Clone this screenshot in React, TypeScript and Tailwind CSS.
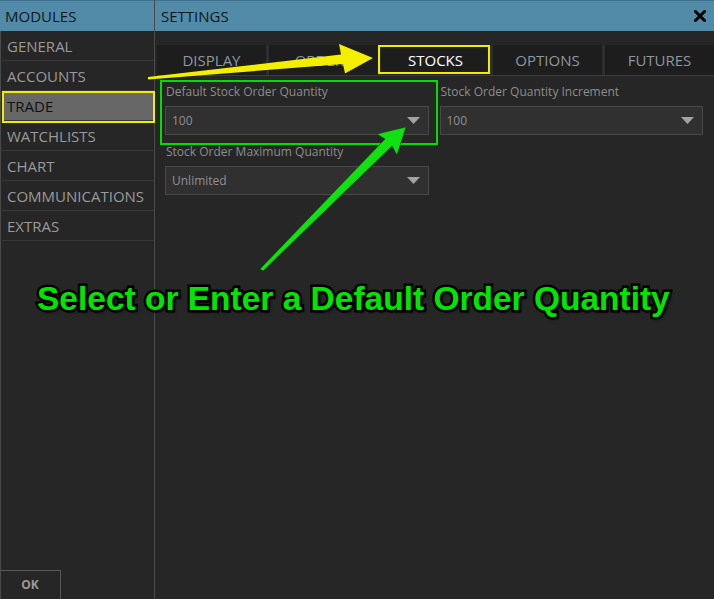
import React from "react";

const sideItems = ["GENERAL", "ACCOUNTS", "TRADE", "WATCHLISTS", "CHART", "COMMUNICATIONS", "EXTRAS"];
const tabs = ["DISPLAY", "ORDERS", "STOCKS", "OPTIONS", "FUTURES"];

function Caret() {
  return (
    <svg width="13" height="7" viewBox="0 0 13 7" className="shrink-0">
      <path d="M0 0 L13 0 L6.5 7 Z" fill="#a3a3a3" />
    </svg>
  );
}

function Field({ label, value }: { label: string; value: string }) {
  return (
    <div className="flex flex-col">
      <div className="pl-[1px] text-[12px] leading-[15px] text-[#8d8d8d] whitespace-nowrap">{label}</div>
      <div className="mt-[7px] h-[29px] flex items-center justify-between border border-[#484848] bg-[#303030] pl-[6px] pr-[8px]">
        <span className="text-[12px] text-[#8f8f8f]">{value}</span>
        <Caret />
      </div>
    </div>
  );
}

export default function App() {
  return (
    <div className="relative w-[714px] h-[599px] overflow-hidden bg-[#262626] font-['Open_Sans',sans-serif]">
      <div className="flex h-full">
        {/* Sidebar */}
        <aside className="w-[155px] flex flex-col border-r border-[#4a4a4a]">
          <div className="h-[31px] shrink-0 flex items-center pl-[5px] bg-[#528ba8] border-t border-[#3f7190] text-[15px] text-[#0e1820]">
            MODULES
          </div>
          <div className="flex-1 flex flex-col border-l border-[#4a4a4a] pl-[1px]">
            {sideItems.map((it) => (
              <div
                key={it}
                className={
                  "h-[30px] shrink-0 flex items-center pl-[5px] pt-[1px] border-b border-[#383838] text-[15px] " +
                  (it === "TRADE" ? "bg-[#676767] text-[#111111]" : "text-[#9a9a9a]")
                }
              >
                {it}
              </div>
            ))}
            <div className="mt-auto -ml-[2px] w-[61px] h-[29px] flex items-center justify-center border-t border-r border-[#575757] text-[12px] font-bold text-[#9a9a9a]">
              OK
            </div>
          </div>
        </aside>

        {/* Settings */}
        <main className="flex-1 flex flex-col">
          <div className="h-[31px] shrink-0 flex items-center justify-between pl-[6px] pr-[8px] bg-[#528ba8] border-t border-[#3f7190] text-[15px] text-[#0e1820]">
            <span>SETTINGS</span>
            <svg width="12" height="12" viewBox="0 0 12 12">
              <path d="M1.5 1.5 L10.5 10.5 M10.5 1.5 L1.5 10.5" stroke="#000" strokeWidth="3" strokeLinecap="round" />
            </svg>
          </div>
          <div className="pt-[14px] pl-[2px]">
            <div className="flex gap-[3px] bg-[#2e2e2e] border-b border-[#3c3c3c]">
              {tabs.map((t) => (
                <div
                  key={t}
                  className={
                    "flex-1 h-[30px] flex items-center justify-center pt-[1px] bg-[#1d1d1d] text-[15px] " +
                    (t === "STOCKS" ? "text-white" : "text-[#8d979e]")
                  }
                >
                  {t}
                </div>
              ))}
            </div>
          </div>
          <div className="grid grid-cols-2 gap-x-[11px] gap-y-[9px] pt-[8px] pl-[10px] pr-[11px]">
            <Field label="Default Stock Order Quantity" value="100" />
            <Field label="Stock Order Quantity Increment" value="100" />
            <Field label="Stock Order Maximum Quantity" value="Unlimited" />
          </div>
        </main>
      </div>

      {/* Annotation boxes */}
      <div className="absolute left-[2px] top-[91px] w-[153px] h-[32px] border-2 border-[#f2ec00]" />
      <div className="absolute left-[378px] top-[45px] w-[112px] h-[29px] border-2 border-[#f2ec00]" />
      <div className="absolute left-[160px] top-[80px] w-[278px] h-[65px] border-2 border-[#00e000]" />

      {/* Arrows */}
      <svg className="absolute inset-0 pointer-events-none" width="714" height="599" viewBox="0 0 714 599">
        <polygon
          points="148,77 341,54.5 339,44 373,58 345,73.5 343,64 148,79.5"
          fill="#f4ef00"
        />
        <polygon
          points="260,269 385,139 377,134 406,127 397,155 392,146 263,271"
          fill="#12e012"
          stroke="#0a3a0a"
          strokeWidth="0.5"
        />
      </svg>

      {/* Big caption */}
      <div className="absolute left-[37px] top-[281px] origin-left scale-x-[0.985] whitespace-nowrap font-['Liberation_Sans',Arial,sans-serif] font-bold text-[34px] leading-[34px] text-[#00e600] [-webkit-text-stroke:5px_#000] [paint-order:stroke_fill] [text-shadow:2px_2px_3px_#000]">
        Select or Enter a Default Order Quantity
      </div>
    </div>
  );
}
